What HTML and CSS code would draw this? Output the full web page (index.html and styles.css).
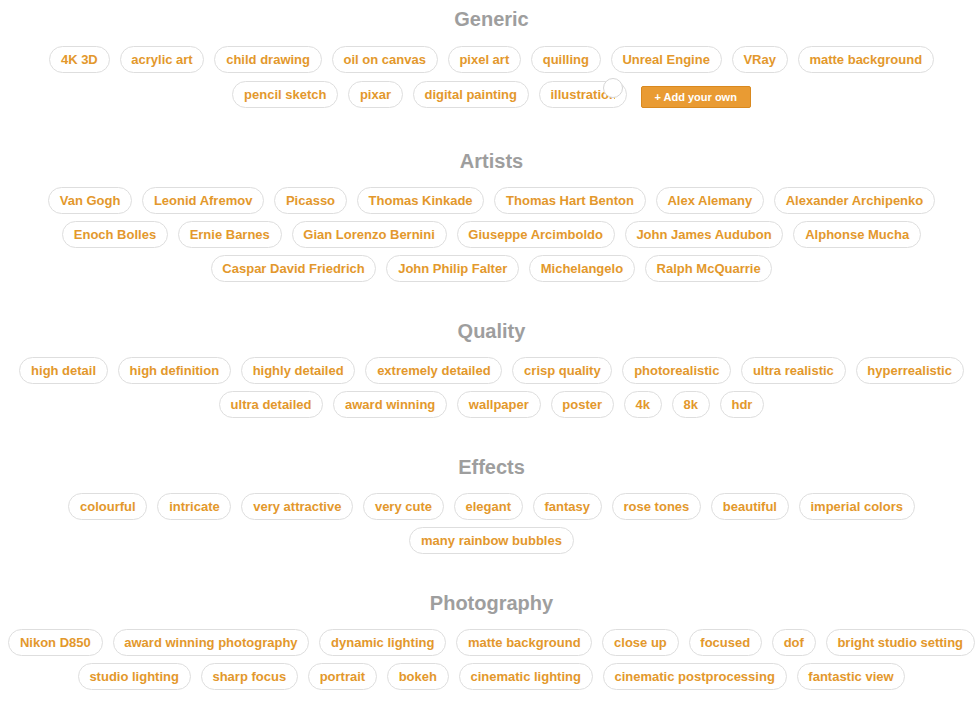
FILE: index.html
```html
<!DOCTYPE html>
<html>
<head>
<meta charset="utf-8">
<link rel="stylesheet" href="styles.css">
</head>
<body>
<main class="page">
  <section class="group group-first">
    <h2 class="title">Generic</h2>
    <div class="row">
      <span class="chip">4K 3D</span><span class="chip">acrylic art</span><span class="chip">child drawing</span><span class="chip">oil on canvas</span><span class="chip">pixel art</span><span class="chip">quilling</span><span class="chip">Unreal Engine</span><span class="chip">VRay</span><span class="chip">matte background</span>
    </div>
    <div class="row">
      <span class="chip">pencil sketch</span><span class="chip">pixar</span><span class="chip">digital painting</span><span class="chip chip-clip"><span class="clip-text">illustration</span><span class="remove"></span></span><button class="add">+ Add your own</button>
    </div>
  </section>
  <section class="group">
    <h2 class="title">Artists</h2>
    <div class="row">
      <span class="chip">Van Gogh</span><span class="chip">Leonid Afremov</span><span class="chip">Picasso</span><span class="chip">Thomas Kinkade</span><span class="chip">Thomas Hart Benton</span><span class="chip">Alex Alemany</span><span class="chip">Alexander Archipenko</span>
    </div>
    <div class="row">
      <span class="chip">Enoch Bolles</span><span class="chip">Ernie Barnes</span><span class="chip">Gian Lorenzo Bernini</span><span class="chip">Giuseppe Arcimboldo</span><span class="chip">John James Audubon</span><span class="chip">Alphonse Mucha</span>
    </div>
    <div class="row">
      <span class="chip">Caspar David Friedrich</span><span class="chip">John Philip Falter</span><span class="chip">Michelangelo</span><span class="chip">Ralph McQuarrie</span>
    </div>
  </section>
  <section class="group">
    <h2 class="title">Quality</h2>
    <div class="row">
      <span class="chip">high detail</span><span class="chip">high definition</span><span class="chip">highly detailed</span><span class="chip">extremely detailed</span><span class="chip">crisp quality</span><span class="chip">photorealistic</span><span class="chip">ultra realistic</span><span class="chip">hyperrealistic</span>
    </div>
    <div class="row">
      <span class="chip">ultra detailed</span><span class="chip">award winning</span><span class="chip">wallpaper</span><span class="chip">poster</span><span class="chip">4k</span><span class="chip">8k</span><span class="chip">hdr</span>
    </div>
  </section>
  <section class="group">
    <h2 class="title">Effects</h2>
    <div class="row">
      <span class="chip">colourful</span><span class="chip">intricate</span><span class="chip">very attractive</span><span class="chip">very cute</span><span class="chip">elegant</span><span class="chip">fantasy</span><span class="chip">rose tones</span><span class="chip">beautiful</span><span class="chip">imperial colors</span>
    </div>
    <div class="row">
      <span class="chip">many rainbow bubbles</span>
    </div>
  </section>
  <section class="group">
    <h2 class="title">Photography</h2>
    <div class="row">
      <span class="chip">Nikon D850</span><span class="chip">award winning photography</span><span class="chip">dynamic lighting</span><span class="chip">matte background</span><span class="chip">close up</span><span class="chip">focused</span><span class="chip">dof</span><span class="chip">bright studio setting</span>
    </div>
    <div class="row">
      <span class="chip">studio lighting</span><span class="chip">sharp focus</span><span class="chip">portrait</span><span class="chip">bokeh</span><span class="chip">cinematic lighting</span><span class="chip">cinematic postprocessing</span><span class="chip">fantastic view</span>
    </div>
  </section>
</main>
</body>
</html>
```

FILE: styles.css
```css
html, body {
  margin: 0;
  padding: 0;
  background: #ffffff;
}
body {
  font-family: "Liberation Sans", Arial, sans-serif;
}
.page {
  width: 980px;
  box-sizing: border-box;
  padding: 7px 0 0 3px;
  display: flex;
  flex-direction: column;
  gap: 37px;
}
.group {
  display: flex;
  flex-direction: column;
  gap: 7px;
}
.group-first {
  gap: 8px;
  margin-bottom: 4px;
}
.title {
  margin: 0 0 7px 0;
  font-size: 20px;
  line-height: 24px;
  font-weight: bold;
  color: #9e9e9e;
  text-align: center;
}
.row {
  display: flex;
  justify-content: center;
  align-items: center;
  gap: 10px;
}
.chip {
  position: relative;
  display: inline-block;
  box-sizing: border-box;
  height: 27px;
  padding: 5px 10.75px;
  border: 1px solid #dedede;
  border-radius: 14px;
  font-size: 13px;
  line-height: 15px;
  font-weight: bold;
  color: #e3982c;
  white-space: nowrap;
  background: #fff;
}
.chip-clip {
  width: 88px;
}
.clip-text {
  display: block;
  overflow: hidden;
}
.remove {
  position: absolute;
  top: -4px;
  right: 3px;
  width: 20px;
  height: 20px;
  border-radius: 50%;
  background: #fff;
  border: 1px solid #d6d6d6;
  box-sizing: border-box;
}
.add {
  margin-left: 4px;
  margin-top: 4px;
  width: 110px;
  height: 22px;
  padding: 0;
  border: 1px solid #d9891f;
  border-radius: 2px;
  background: #e99b33;
  color: #ffffff;
  font-family: "Liberation Sans", Arial, sans-serif;
  font-size: 11px;
  font-weight: bold;
  line-height: 20px;
}
```
